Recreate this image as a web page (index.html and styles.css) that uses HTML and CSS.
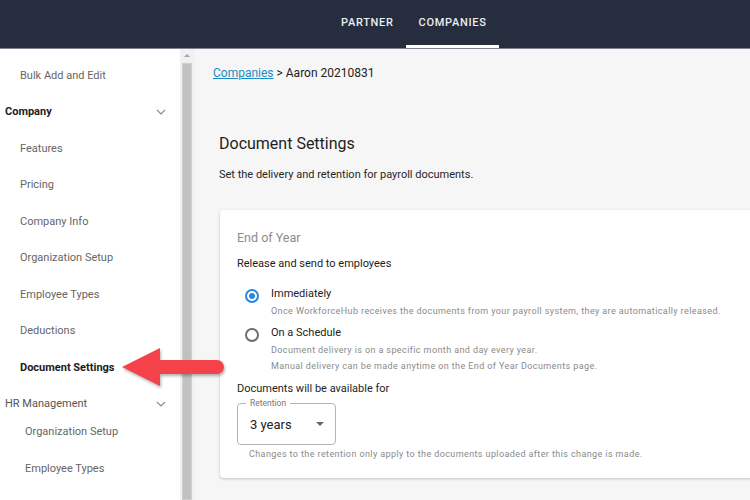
FILE: index.html
```html
<!DOCTYPE html>
<html lang="en">
  <head>
    <meta charset="UTF-8" />
    <title>Document Settings</title>
    <link rel="stylesheet" href="styles.css">
  </head>
  <body>
    <header class="topbar">
      <nav class="tabs">
        <a class="tab">PARTNER</a>
        <a class="tab active">COMPANIES</a>
      </nav>
    </header>

    <div class="layout">
      <aside class="sidebar">
        <div class="item">Bulk Add and Edit</div>
        <div class="group bold">
          Company
          <svg class="chev" width="10" height="6" viewBox="0 0 10 6"><path d="M1 1l4 4 4-4" fill="none" stroke="#888" stroke-width="1.1"/></svg>
        </div>
        <div class="item">Features</div>
        <div class="item">Pricing</div>
        <div class="item">Company Info</div>
        <div class="item">Organization Setup</div>
        <div class="item">Employee Types</div>
        <div class="item">Deductions</div>
        <div class="item current">Document Settings</div>
        <div class="group">
          HR Management
          <svg class="chev" width="10" height="6" viewBox="0 0 10 6"><path d="M1 1l4 4 4-4" fill="none" stroke="#888" stroke-width="1.1"/></svg>
        </div>
        <div class="sublist">
          <div class="item sub">Organization Setup</div>
          <div class="item sub">Employee Types</div>
        </div>
      </aside>

      <div class="scrollbar">
        <div class="scroll-up"></div>
        <div class="thumb"></div>
      </div>

      <main class="main">
        <div class="crumbs"><a class="link">Companies</a> &gt; Aaron 20210831</div>
        <h2 class="title">Document Settings</h2>
        <p class="subtitle">Set the delivery and retention for payroll documents.</p>

        <section class="card">
          <div class="card-title">End of Year</div>
          <div class="label">Release and send to employees</div>

          <div class="option">
            <span class="radio checked"></span>
            <div>
              <div class="opt-name">Immediately</div>
              <div class="hint">Once WorkforceHub receives the documents from your payroll system, they are automatically released.</div>
            </div>
          </div>
          <div class="option second">
            <span class="radio"></span>
            <div>
              <div class="opt-name">On a Schedule</div>
              <div class="hint">Document delivery is on a specific month and day every year.</div>
              <div class="hint">Manual delivery can be made anytime on the End of Year Documents page.</div>
            </div>
          </div>

          <div class="label avail">Documents will be available for</div>
          <div class="select">
            <span class="select-label">Retention</span>
            <span class="select-value">3 years</span>
            <span class="caret"></span>
          </div>
          <div class="hint helper">Changes to the retention only apply to the documents uploaded after this change is made.</div>
        </section>
      </main>
    </div>

    <svg class="pointer" width="120" height="60" viewBox="0 0 120 60">
      <path d="M4 22 L42 3 L42 15 L99 15 A7 7 0 0 1 99 29 L42 29 L42 41 Z" fill="#f4424a"/>
    </svg>
  </body>
</html>
```

FILE: styles.css
```css
body {
  margin: 0;
  width: 750px;
  height: 500px;
  overflow: hidden;
  font-family: Roboto, "Liberation Sans", sans-serif;
  background: #f6f6f6;
  position: relative;
}

.topbar {
  height: 48px;
  background: #252d3e;
  border-bottom: 1px solid #7d828c;
  display: flex;
}

.tabs {
  display: flex;
  margin-left: 329px;
}

.tab {
  color: #eceef2;
  font-size: 11px;
  font-weight: 500;
  letter-spacing: 0.7px;
  padding: 0 12px;
  line-height: 46px;
  border-bottom: 3px solid transparent;
}

.tab.active {
  border-bottom-color: #fff;
  padding: 0 12px 0 13px;
}

.layout {
  display: flex;
  height: 451px;
}

.sidebar {
  width: 180px;
  background: #fff;
  padding-top: 8px;
  font-size: 11px;
  color: #666;
  box-sizing: border-box;
}

.item,
.group {
  height: 36.5px;
  display: flex;
  align-items: center;
  padding-left: 20px;
}

.group {
  padding-left: 5px;
  justify-content: space-between;
  padding-right: 14px;
  color: #555;
}

.bold {
  font-weight: 700;
  color: #222;
}

.current {
  font-weight: 700;
  color: #1b1b1b;
}

.sublist {
  margin-top: -8.5px;
}

.item.sub {
  padding-left: 25px;
}

.scrollbar {
  width: 15px;
  background: #f1f1f1;
  display: flex;
  flex-direction: column;
}

.scroll-up {
  height: 14px;
  position: relative;
}

.scroll-up::after {
  content: "";
  position: absolute;
  left: 4px;
  top: 5px;
  border-left: 3px solid transparent;
  border-right: 3px solid transparent;
  border-bottom: 3px solid #a3a3a3;
}

.thumb {
  flex: 1;
  margin: 0 3px 0 2px;
  background: #c1c1c1;
  border: 1px solid #d0d0d0;
}

.main {
  flex: 1;
  padding: 16px 0 0 18px;
  min-width: 0;
  overflow: hidden;
}

.crumbs {
  font-size: 12px;
  line-height: 16px;
  color: #222;
}

.link {
  color: #1c8cc4;
  text-decoration: underline;
}

.title {
  margin: 53px 0 0 6px;
  font-size: 16px;
  font-weight: 400;
  line-height: 20px;
  color: #1e1e1e;
}

.subtitle {
  margin: 14px 0 0 6px;
  font-size: 11px;
  line-height: 14px;
  color: #262626;
}

.card {
  margin: 28px 0 0 7px;
  width: 560px;
  background: #fff;
  border-radius: 4px;
  box-shadow: 0 1px 3px rgba(0, 0, 0, 0.22);
  padding: 20px 0 16px 17px;
}

.card-title {
  font-size: 12.5px;
  line-height: 16px;
  color: #8c8c8c;
}

.label {
  margin-top: 11px;
  font-size: 11px;
  line-height: 14px;
  color: #1e1e1e;
}

.option {
  display: flex;
  margin-top: 16px;
}

.option.second {
  margin-top: 7px;
}

.radio {
  width: 10px;
  height: 10px;
  border: 2px solid #6e6e6e;
  border-radius: 50%;
  margin: 2px 12px 0 8px;
  flex: none;
  box-sizing: content-box;
  position: relative;
}

.radio.checked {
  border-color: #2b88e0;
}

.radio.checked::after {
  content: "";
  position: absolute;
  left: 2px;
  top: 2px;
  width: 6px;
  height: 6px;
  border-radius: 50%;
  background: #2b88e0;
}

.opt-name {
  font-size: 11px;
  line-height: 14px;
  color: #222;
  margin-bottom: 2px;
}

.hint {
  font-size: 9px;
  line-height: 16px;
  letter-spacing: 0.4px;
  color: #8a8a8a;
  white-space: nowrap;
}

.label.avail {
  margin-top: 8px;
}

.select {
  margin-top: 7px;
  width: 99px;
  height: 42px;
  box-sizing: border-box;
  border: 1px solid #b4b4b4;
  border-radius: 4px;
  position: relative;
  display: flex;
  align-items: center;
  padding-left: 12px;
}

.select-label {
  position: absolute;
  top: -7px;
  left: 8px;
  background: #fff;
  padding: 0 4px;
  font-size: 8.5px;
  line-height: 12px;
  color: #777;
}

.select-value {
  font-size: 13px;
  color: #222;
  flex: 1;
}

.caret {
  margin-right: 11px;
  border-left: 4px solid transparent;
  border-right: 4px solid transparent;
  border-top: 4px solid #666;
}

.hint.helper {
  margin-top: 1px;
  padding-left: 12px;
}

.pointer {
  position: absolute;
  left: 118px;
  top: 345px;
  filter: drop-shadow(1px 2px 1.5px rgba(0, 0, 0, 0.3));
}
```
